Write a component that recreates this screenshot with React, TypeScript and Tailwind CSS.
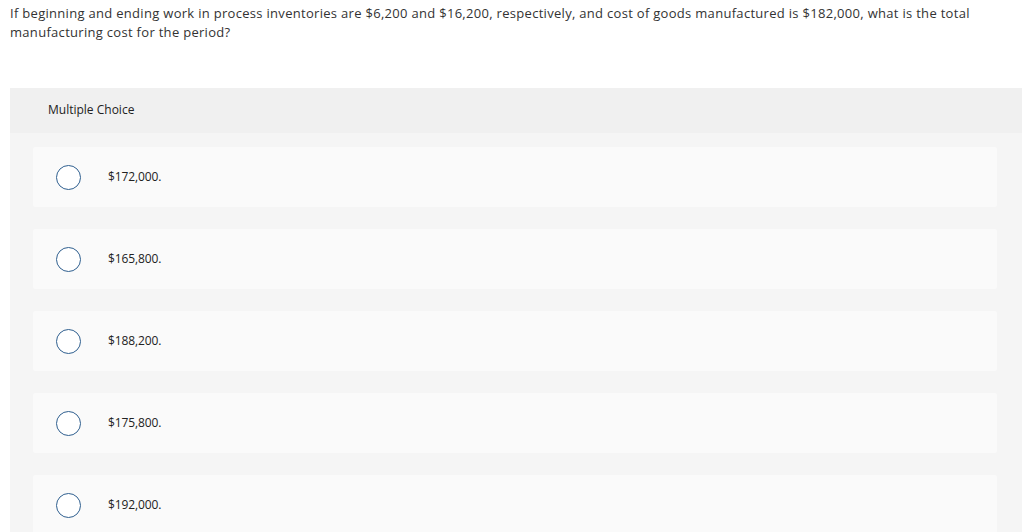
const options = ['$172,000.', '$165,800.', '$188,200.', '$175,800.', '$192,000.']

export default function App() {
  return (
    <div className="min-h-screen bg-white pt-[4px] text-[#333]" style={{ fontFamily: '"Open Sans", Lato, sans-serif' }}>
      <p className="whitespace-nowrap px-[10px] text-[13px] leading-[19px] tracking-[0.3px] text-[#333]">
        If beginning and ending work in process inventories are $6,200 and $16,200, respectively, and cost of goods
        manufactured is $182,000, what is the total
        <br />
        manufacturing cost for the period?
      </p>

      <div className="mx-[10px] mt-[46px] w-[1012px] bg-[#f5f5f5]">
        <div className="flex h-[45px] items-center bg-[#f0f0f0] pb-[2px] pl-[38px] text-[12px] text-[#222]">
          Multiple Choice
        </div>
        <div className="flex flex-col gap-[22px] pl-[23px] pr-[25px] pt-[14px]">
          {options.map(opt => (
            <div key={opt} className="flex h-[60px] items-center rounded-[2px] bg-[#fafafa] pl-[23px]">
              <span className="h-[25px] w-[25px] shrink-0 rounded-full border-[1.5px] border-[#2f5f8f] bg-white" />
              <span className="ml-[27px] text-[12px] tracking-[-0.1px] text-[#222]">{opt}</span>
            </div>
          ))}
        </div>
      </div>
    </div>
  )
}
